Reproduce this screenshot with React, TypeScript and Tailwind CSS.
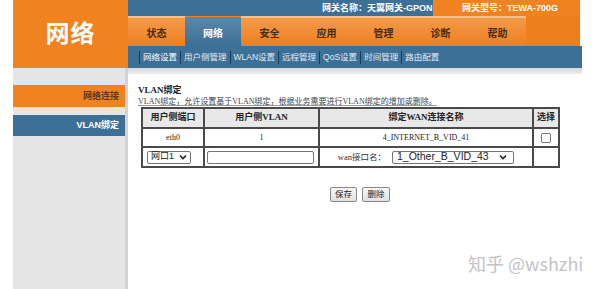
import React from 'react';

const TABS = ['状态', '网络', '安全', '应用', '管理', '诊断', '帮助'];
const SUBNAV = ['网络设置', '用户侧管理', 'WLAN设置', '远程管理', 'QoS设置', '时间管理', '路由配置'];

const Chevron = () => (
  <svg width="8" height="6" viewBox="0 0 8 6" className="shrink-0">
    <path d="M1 1.5 L4 4.5 L7 1.5" fill="none" stroke="#222" strokeWidth="1.6" />
  </svg>
);

export default function App() {
  return (
    <div className="relative w-[600px] h-[289px] overflow-hidden bg-white font-['Liberation_Sans','Noto_Sans_CJK_SC',sans-serif]">
      <div className="flex h-full pl-[13px]">
        {/* left column: logo + side menu */}
        <aside className="w-[115px] flex flex-col shrink-0">
          <div className="h-[68px] bg-[#f0831f] flex items-center justify-center text-white text-[24px] font-bold tracking-[1px]">
            网络
          </div>
          <div className="flex-1 bg-[#e5e5e5] border-r-[3px] border-[#d2d2d2] pt-[17px] flex flex-col gap-[8px]">
            <div className="h-[22px] bg-[#f0831f] text-right pr-[6px] leading-[22px] text-[9px] font-bold text-[#5a3a1c]">
              网络连接
            </div>
            <div className="h-[21px] bg-[#3d7096] text-right pr-[6px] leading-[21px] text-[9px] font-bold text-white">
              VLAN绑定
            </div>
          </div>
        </aside>

        {/* right column */}
        <div className="w-[454px] flex flex-col">
          {/* top bar */}
          <div className="h-[16px] flex text-white text-[9px] font-bold leading-[16px]">
            <div className="w-[305px] bg-[#3d7096] pl-[194px] whitespace-nowrap">网关名称：天翼网关-GPON</div>
            <div className="w-[147px] bg-[#f0831f] pl-[29px] whitespace-nowrap">网关型号：TEWA-700G</div>
          </div>
          {/* tabs */}
          <div className="h-[30px] w-[452px] bg-[#ee7f1c] flex">
            {TABS.map((t) => (
              <div
                key={t}
                className={
                  t === '网络'
                    ? 'w-[56px] mt-[1px] bg-gradient-to-b from-[#5b88aa] to-[#3d7096] flex items-end justify-center pb-[5px] text-[10px] font-bold text-white'
                    : 'w-[57px] border-t-[2px] border-[#f8c08c] bg-gradient-to-b from-[#f39a48] to-[#ee7f1c] flex items-end justify-center pb-[5px] text-[10px] font-bold text-[#4a2a10]'
                }
              >
                {t}
              </div>
            ))}
          </div>
          {/* sub navigation */}
          <div className="h-[22px] bg-[#3d7096] flex items-center pl-[8px] text-[8.5px] text-white whitespace-nowrap">
            {SUBNAV.map((s) => (
              <React.Fragment key={s}>
                <span className="w-px h-[13px] bg-[#1c3a52] mx-[3px]" />
                <span className={s === '网络设置' ? 'text-white' : 'text-[#e3ecf3]'}>{s}</span>
              </React.Fragment>
            ))}
          </div>
          <div className="h-[6px] bg-gradient-to-b from-[#d9d9d9] to-[#ececec]" />

          {/* content */}
          <div className="pt-[11px] pl-[10px] font-['Liberation_Serif','Noto_Sans_CJK_SC',serif] text-[#222]">
            <div className="text-[9px] font-bold leading-[11px]">VLAN绑定</div>
            <div className="text-[8px] leading-[11px] text-[#444] underline decoration-[#999] whitespace-nowrap">
              VLAN绑定，允许设置基于VLAN绑定，根据业务需要进行VLAN绑定的增加或删除。
            </div>

            <table className="ml-[3px] w-[417px] table-fixed border-separate border-spacing-0 border border-[#4a4a4a] text-[9px] text-[#222]">
              <colgroup>
                <col className="w-[62px]" />
                <col className="w-[115px]" />
                <col className="w-[214px]" />
                <col className="w-[26px]" />
              </colgroup>
              <thead>
                <tr className="h-[20px] bg-[#e8e8e8] font-bold">
                  <th className="border border-[#4a4a4a] font-bold">用户侧端口</th>
                  <th className="border border-[#4a4a4a] font-bold">用户侧VLAN</th>
                  <th className="border border-[#4a4a4a] font-bold">绑定WAN连接名称</th>
                  <th className="border border-[#4a4a4a] font-bold">选择</th>
                </tr>
              </thead>
              <tbody>
                <tr className="h-[19px] text-center text-[8px]">
                  <td className="border border-[#4a4a4a] text-[#222]">eth0</td>
                  <td className="border border-[#4a4a4a] text-[#222]">1</td>
                  <td className="border border-[#4a4a4a] text-[#222]">4_INTERNET_B_VID_41</td>
                  <td className="border border-[#4a4a4a]">
                    <div className="mx-auto w-[10px] h-[10px] rounded-[2px] border border-[#777] bg-white" />
                  </td>
                </tr>
                <tr className="h-[20px]">
                  <td className="border border-[#4a4a4a] pl-[4px]">
                    <div className="w-[44px] h-[13px] rounded-[2px] border border-[#777] flex items-center justify-between px-[3px] font-['Liberation_Sans','Noto_Sans_CJK_SC',sans-serif] text-[9px]">
                      <span>网口1</span>
                      <Chevron />
                    </div>
                  </td>
                  <td className="border border-[#4a4a4a] pl-[2px]">
                    <div className="w-[107px] h-[13px] rounded-[2px] border border-[#777] bg-white" />
                  </td>
                  <td className="border border-[#4a4a4a]">
                    <div className="flex items-center justify-end pr-[18px] gap-[6px]">
                      <span className="text-[8.5px] text-[#333]">wan接口名：</span>
                      <div className="w-[122px] h-[13px] rounded-[2px] border border-[#777] flex items-center justify-between pl-[4px] pr-[6px] font-['Liberation_Sans',sans-serif] text-[10.5px] text-[#222]">
                        <span>1_Other_B_VID_43</span>
                        <Chevron />
                      </div>
                    </div>
                  </td>
                  <td className="border border-[#4a4a4a]" />
                </tr>
              </tbody>
            </table>

            <div className="mt-[19px] w-[444px] flex justify-center gap-[5px] font-['Liberation_Sans','Noto_Sans_CJK_SC',sans-serif]">
              <button className="w-[27px] h-[15px] border border-[#888] rounded-[2px] bg-gradient-to-b from-[#f6f6f6] to-[#e2e2e2] text-[8.5px] text-[#222] leading-none">保存</button>
              <button className="w-[28px] h-[15px] border border-[#888] rounded-[2px] bg-gradient-to-b from-[#f6f6f6] to-[#e2e2e2] text-[8.5px] text-[#222] leading-none">删除</button>
            </div>
          </div>
        </div>
      </div>

      {/* watermark */}
      <div className="absolute left-[468px] top-[250px] text-[18px] text-[#c4c4c4] whitespace-nowrap font-['Noto_Sans_CJK_SC',sans-serif]">
        知乎 @wshzhi
      </div>
    </div>
  );
}
